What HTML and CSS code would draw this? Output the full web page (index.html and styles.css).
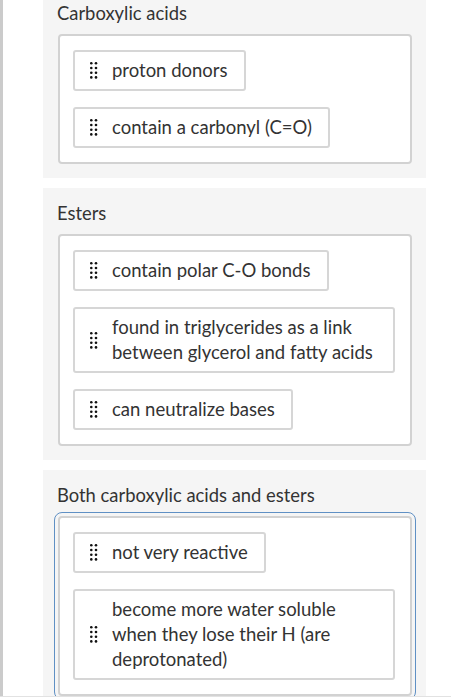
FILE: index.html
```html
<!DOCTYPE html>
<html>
<head>
<meta charset="utf-8">
<link rel="stylesheet" href="styles.css">
</head>
<body>
<div class="page">
  <div class="column">
    <section class="panel first">
      <div class="panel-title">Carboxylic acids</div>
      <div class="dropzone">
        <div class="item"><span class="grip"><svg viewBox="0 0 8 17" width="8" height="17"><g fill="#111"><circle cx="1.3" cy="1.3" r="1.3"/><circle cx="6" cy="1.3" r="1.3"/><circle cx="1.3" cy="6" r="1.3"/><circle cx="6" cy="6" r="1.3"/><circle cx="1.3" cy="10.7" r="1.3"/><circle cx="6" cy="10.7" r="1.3"/><circle cx="1.3" cy="15.4" r="1.3"/><circle cx="6" cy="15.4" r="1.3"/></g></svg></span><span class="label">proton donors</span></div>
        <div class="item"><span class="grip"><svg viewBox="0 0 8 17" width="8" height="17"><g fill="#111"><circle cx="1.3" cy="1.3" r="1.3"/><circle cx="6" cy="1.3" r="1.3"/><circle cx="1.3" cy="6" r="1.3"/><circle cx="6" cy="6" r="1.3"/><circle cx="1.3" cy="10.7" r="1.3"/><circle cx="6" cy="10.7" r="1.3"/><circle cx="1.3" cy="15.4" r="1.3"/><circle cx="6" cy="15.4" r="1.3"/></g></svg></span><span class="label">contain a carbonyl (C=O)</span></div>
      </div>
    </section>
    <section class="panel">
      <div class="panel-title">Esters</div>
      <div class="dropzone">
        <div class="item"><span class="grip"><svg viewBox="0 0 8 17" width="8" height="17"><g fill="#111"><circle cx="1.3" cy="1.3" r="1.3"/><circle cx="6" cy="1.3" r="1.3"/><circle cx="1.3" cy="6" r="1.3"/><circle cx="6" cy="6" r="1.3"/><circle cx="1.3" cy="10.7" r="1.3"/><circle cx="6" cy="10.7" r="1.3"/><circle cx="1.3" cy="15.4" r="1.3"/><circle cx="6" cy="15.4" r="1.3"/></g></svg></span><span class="label">contain polar C-O bonds</span></div>
        <div class="item wide"><span class="grip"><svg viewBox="0 0 8 17" width="8" height="17"><g fill="#111"><circle cx="1.3" cy="1.3" r="1.3"/><circle cx="6" cy="1.3" r="1.3"/><circle cx="1.3" cy="6" r="1.3"/><circle cx="6" cy="6" r="1.3"/><circle cx="1.3" cy="10.7" r="1.3"/><circle cx="6" cy="10.7" r="1.3"/><circle cx="1.3" cy="15.4" r="1.3"/><circle cx="6" cy="15.4" r="1.3"/></g></svg></span><span class="label">found in triglycerides as a link<br>between glycerol and fatty acids</span></div>
        <div class="item"><span class="grip"><svg viewBox="0 0 8 17" width="8" height="17"><g fill="#111"><circle cx="1.3" cy="1.3" r="1.3"/><circle cx="6" cy="1.3" r="1.3"/><circle cx="1.3" cy="6" r="1.3"/><circle cx="6" cy="6" r="1.3"/><circle cx="1.3" cy="10.7" r="1.3"/><circle cx="6" cy="10.7" r="1.3"/><circle cx="1.3" cy="15.4" r="1.3"/><circle cx="6" cy="15.4" r="1.3"/></g></svg></span><span class="label">can neutralize bases</span></div>
      </div>
    </section>
    <section class="panel">
      <div class="panel-title">Both carboxylic acids and esters</div>
      <div class="dropzone focused">
        <div class="item"><span class="grip"><svg viewBox="0 0 8 17" width="8" height="17"><g fill="#111"><circle cx="1.3" cy="1.3" r="1.3"/><circle cx="6" cy="1.3" r="1.3"/><circle cx="1.3" cy="6" r="1.3"/><circle cx="6" cy="6" r="1.3"/><circle cx="1.3" cy="10.7" r="1.3"/><circle cx="6" cy="10.7" r="1.3"/><circle cx="1.3" cy="15.4" r="1.3"/><circle cx="6" cy="15.4" r="1.3"/></g></svg></span><span class="label">not very reactive</span></div>
        <div class="item wide"><span class="grip"><svg viewBox="0 0 8 17" width="8" height="17"><g fill="#111"><circle cx="1.3" cy="1.3" r="1.3"/><circle cx="6" cy="1.3" r="1.3"/><circle cx="1.3" cy="6" r="1.3"/><circle cx="6" cy="6" r="1.3"/><circle cx="1.3" cy="10.7" r="1.3"/><circle cx="6" cy="10.7" r="1.3"/><circle cx="1.3" cy="15.4" r="1.3"/><circle cx="6" cy="15.4" r="1.3"/></g></svg></span><span class="label">become more water soluble<br>when they lose their H (are<br>deprotonated)</span></div>
      </div>
    </section>
  </div>
</div>
</body>
</html>
```
FILE: styles.css
```css
html, body {
  margin: 0;
  padding: 0;
  background: #fff;
}
body {
  font-family: Lato, "Open Sans", sans-serif;
  color: #333;
}
.page {
  height: 696px;
  overflow: hidden;
  border-bottom: 1px solid #e2e2e2;
}
.column {
  border-left: 3px solid #cbcbcb;
  height: 100%;
  box-sizing: border-box;
  padding-left: 40px;
  width: 426px;
  display: flex;
  flex-direction: column;
  gap: 10px;
}
.panel {
  background: #f5f5f5;
  padding: 14px 14px 14px 14px;
  flex: none;
}
.panel.first {
  margin-top: -12px;
}
.panel-title {
  font-size: 18.4px;
  line-height: 22px;
  margin-bottom: 10px;
}
.dropzone {
  background: #fff;
  border: 2px solid #d2d2d2;
  border-radius: 4px;
  padding: 14px 15px 14px 13px;
  margin-left: 1px;
  display: flex;
  flex-direction: column;
  align-items: flex-start;
  gap: 16px;
}
.dropzone.focused {
  outline: 1px solid #5f90c4;
  outline-offset: 3px;
  border-radius: 4px;
}
.item {
  display: flex;
  align-items: center;
  background: #fff;
  border: 2px solid #d6d6d6;
  border-radius: 3px;
  padding: 6px 16px 6px 15px;
  font-size: 18.5px;
  line-height: 25px;
}
.item.wide {
  align-self: stretch;
}
.grip {
  display: flex;
  flex: none;
  margin-right: 14px;
}
.label {
  display: block;
}
```
